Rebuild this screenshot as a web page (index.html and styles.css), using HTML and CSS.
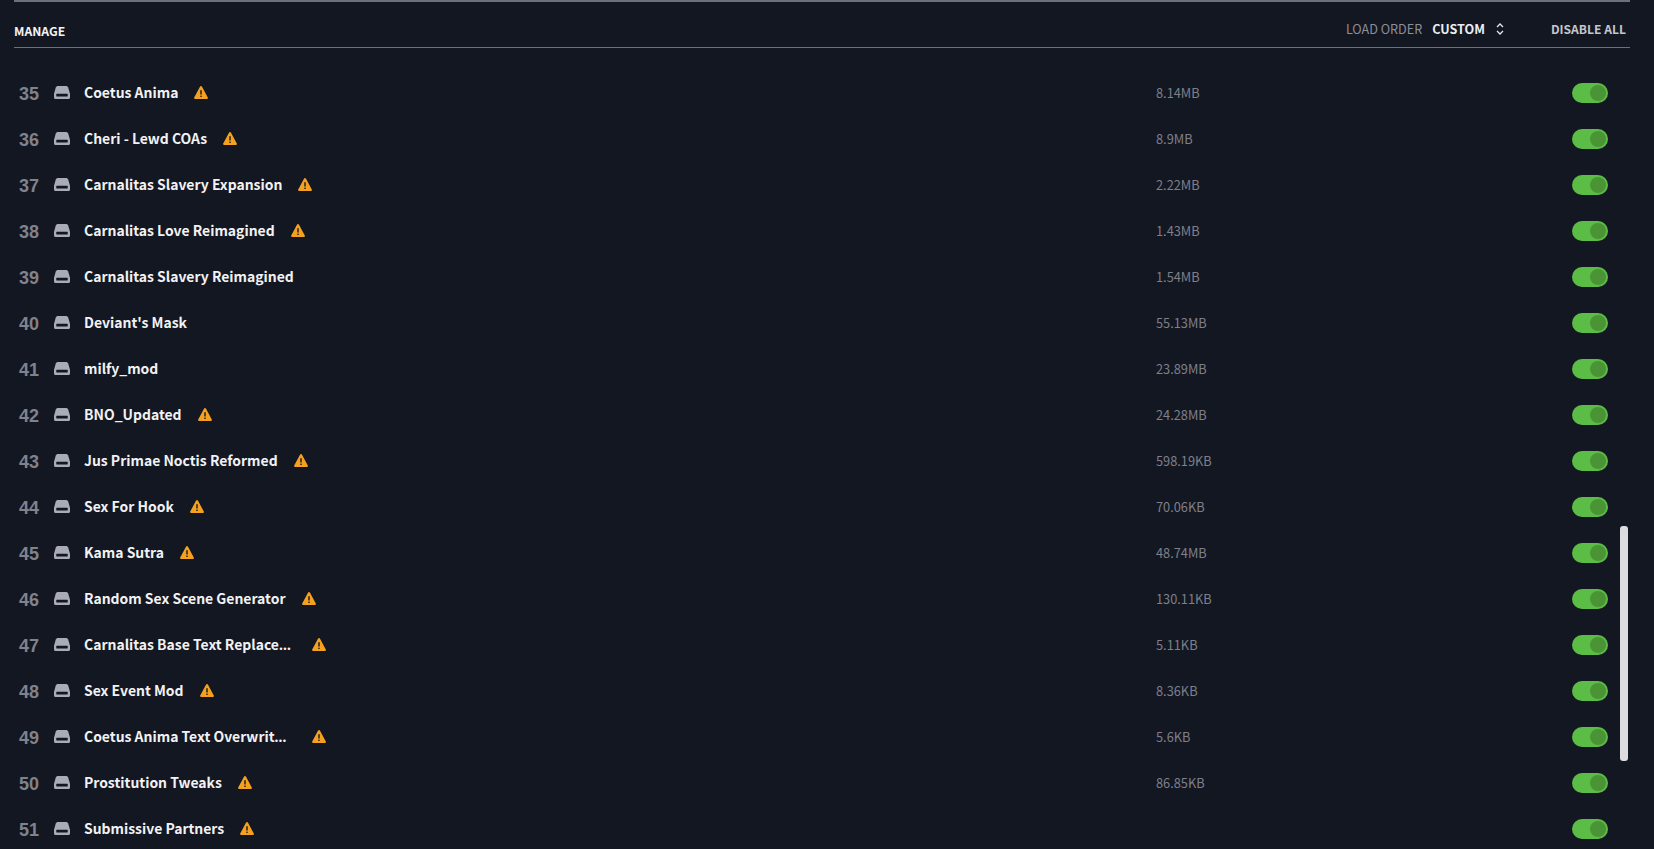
FILE: index.html
```html
<!DOCTYPE html>
<html lang="en">
<head>
<meta charset="utf-8">
<title>Manage</title>
<link rel="stylesheet" href="styles.css">
</head>
<body>
<svg class="defs" width="0" height="0" aria-hidden="true">
  <symbol id="drive" viewBox="0 0 16 13"><path d="M4 0h8c1.100 0 1.900.6 2.200 1.600L16 7.800V11.500c0 .9-.6 1.500-1.500 1.500h-13C.6 13 0 12.400 0 11.500V7.800L1.800 1.600C2.100.6 2.900 0 4 0Z" fill="#a9abb6"/><rect x="2.300" y="7.800" width="11.400" height="2.600" rx=".5" fill="#131722"/></symbol>
  <symbol id="warn" viewBox="0 0 14 13"><path d="M7 0c.4 0 .7.200.9.500l5.900 11c.4.700 0 1.500-.8 1.500H1c-.8 0-1.200-.8-.8-1.500L6.100.5C6.300.2 6.600 0 7 0Z" fill="#f5a11f"/><rect x="6.300" y="4.200" width="1.400" height="4.300" fill="#131722"/><rect x="6.300" y="9.600" width="1.400" height="1.400" fill="#131722"/></symbol>
</svg>
<main class="page">
  <div class="topbar"></div>
  <header class="head">
    <span class="manage">MANAGE</span>
    <div class="controls">
      <span class="lo-label">LOAD ORDER</span>
      <span class="lo-value">CUSTOM</span>
      <svg class="updown" viewBox="0 0 8 12" width="8" height="12"><path d="M1 4l3-3 3 3M1 8l3 3 3-3" fill="none" stroke="#e6e7ea" stroke-width="1.300"/></svg>
      <span class="disable">DISABLE ALL</span>
    </div>
  </header>
  <section class="list">
    <div class="row"><span class="num">35</span><svg class="drive"><use href="#drive"/></svg><div class="name"><span class="title">Coetus Anima</span><svg class="warn"><use href="#warn"/></svg></div><span class="size">8.14MB</span><span class="toggle"><i class="knob"></i></span></div>
    <div class="row"><span class="num">36</span><svg class="drive"><use href="#drive"/></svg><div class="name"><span class="title">Cheri - Lewd COAs</span><svg class="warn"><use href="#warn"/></svg></div><span class="size">8.9MB</span><span class="toggle"><i class="knob"></i></span></div>
    <div class="row"><span class="num">37</span><svg class="drive"><use href="#drive"/></svg><div class="name"><span class="title">Carnalitas Slavery Expansion</span><svg class="warn"><use href="#warn"/></svg></div><span class="size">2.22MB</span><span class="toggle"><i class="knob"></i></span></div>
    <div class="row"><span class="num">38</span><svg class="drive"><use href="#drive"/></svg><div class="name"><span class="title">Carnalitas Love Reimagined</span><svg class="warn"><use href="#warn"/></svg></div><span class="size">1.43MB</span><span class="toggle"><i class="knob"></i></span></div>
    <div class="row"><span class="num">39</span><svg class="drive"><use href="#drive"/></svg><div class="name"><span class="title">Carnalitas Slavery Reimagined</span></div><span class="size">1.54MB</span><span class="toggle"><i class="knob"></i></span></div>
    <div class="row"><span class="num">40</span><svg class="drive"><use href="#drive"/></svg><div class="name"><span class="title">Deviant's Mask</span></div><span class="size">55.13MB</span><span class="toggle"><i class="knob"></i></span></div>
    <div class="row"><span class="num">41</span><svg class="drive"><use href="#drive"/></svg><div class="name"><span class="title">milfy_mod</span></div><span class="size">23.89MB</span><span class="toggle"><i class="knob"></i></span></div>
    <div class="row"><span class="num">42</span><svg class="drive"><use href="#drive"/></svg><div class="name"><span class="title">BNO_Updated</span><svg class="warn"><use href="#warn"/></svg></div><span class="size">24.28MB</span><span class="toggle"><i class="knob"></i></span></div>
    <div class="row"><span class="num">43</span><svg class="drive"><use href="#drive"/></svg><div class="name"><span class="title">Jus Primae Noctis Reformed</span><svg class="warn"><use href="#warn"/></svg></div><span class="size">598.19KB</span><span class="toggle"><i class="knob"></i></span></div>
    <div class="row"><span class="num">44</span><svg class="drive"><use href="#drive"/></svg><div class="name"><span class="title">Sex For Hook</span><svg class="warn"><use href="#warn"/></svg></div><span class="size">70.06KB</span><span class="toggle"><i class="knob"></i></span></div>
    <div class="row"><span class="num">45</span><svg class="drive"><use href="#drive"/></svg><div class="name"><span class="title">Kama Sutra</span><svg class="warn"><use href="#warn"/></svg></div><span class="size">48.74MB</span><span class="toggle"><i class="knob"></i></span></div>
    <div class="row"><span class="num">46</span><svg class="drive"><use href="#drive"/></svg><div class="name"><span class="title">Random Sex Scene Generator</span><svg class="warn"><use href="#warn"/></svg></div><span class="size">130.11KB</span><span class="toggle"><i class="knob"></i></span></div>
    <div class="row"><span class="num">47</span><svg class="drive"><use href="#drive"/></svg><div class="name"><span class="title long">Carnalitas Base Text Replace<span class="dots">…</span></span><svg class="warn"><use href="#warn"/></svg></div><span class="size">5.11KB</span><span class="toggle"><i class="knob"></i></span></div>
    <div class="row"><span class="num">48</span><svg class="drive"><use href="#drive"/></svg><div class="name"><span class="title">Sex Event Mod</span><svg class="warn"><use href="#warn"/></svg></div><span class="size">8.36KB</span><span class="toggle"><i class="knob"></i></span></div>
    <div class="row"><span class="num">49</span><svg class="drive"><use href="#drive"/></svg><div class="name"><span class="title long">Coetus Anima Text Overwrit<span class="dots">…</span></span><svg class="warn"><use href="#warn"/></svg></div><span class="size">5.6KB</span><span class="toggle"><i class="knob"></i></span></div>
    <div class="row"><span class="num">50</span><svg class="drive"><use href="#drive"/></svg><div class="name"><span class="title">Prostitution Tweaks</span><svg class="warn"><use href="#warn"/></svg></div><span class="size">86.85KB</span><span class="toggle"><i class="knob"></i></span></div>
    <div class="row"><span class="num">51</span><svg class="drive"><use href="#drive"/></svg><div class="name"><span class="title">Submissive Partners</span><svg class="warn"><use href="#warn"/></svg></div><span class="size"></span><span class="toggle"><i class="knob"></i></span></div>
  </section>
  <div class="scrollbar"></div>
</main>
</body>
</html>
```
FILE: styles.css
```css
html, body {
  margin: 0;
  height: 100%;
  background: #131722;
  overflow: hidden;
}
.defs { position: absolute; }
.page {
  position: relative;
  height: 849px;
  box-sizing: border-box;
  padding: 0 24px 0 14px;
  font-family: "Noto Sans CJK SC", "Noto Sans", "Liberation Sans", sans-serif;
  color: #f2f2f4;
  overflow: hidden;
}
.topbar { height: 2px; background: #6d6f79; }
.head {
  display: flex;
  justify-content: space-between;
  align-items: center;
  height: 46px;
  box-sizing: border-box;
  border-bottom: 1px solid #6d6f79;
  padding-right: 4px;
}
.manage { font-size: 12.200px; font-weight: 700; line-height: 1; padding-top: 13px; color: #f2f2f4; }
.controls { display: flex; align-items: center; padding-top: 9px; font-size: 12.600px; line-height: 1; }
.lo-label { color: #8c8e98; }
.lo-value { margin-left: 10px; font-weight: 700; color: #eceef0; }
.updown { margin-left: 11px; }
.disable { margin-left: 47px; font-size: 12.100px; font-weight: 700; color: #c4c6cc; }
.list { padding-top: 22px; }
.row {
  display: grid;
  grid-template-columns: 40px 30px 1072px 416px 36px;
  align-items: center;
  height: 46px;
}
.num {
  padding: 3px 0 0 5px;
  font-family: "Liberation Sans", sans-serif;
  font-size: 18px;
  font-weight: 700;
  color: #80828c;
}
.drive { width: 16px; height: 13px; margin-bottom: 1px; }
.name { display: flex; align-items: center; min-width: 0; }
.title {
  padding-bottom: 2px;
  font-size: 13.950px;
  font-weight: 700;
  line-height: 20px;
  white-space: nowrap;
  color: #f2f2f4;
}
.title.long { display: inline-block; width: 212px; }
.dots { font-family: "Noto Sans", sans-serif; letter-spacing: 2px; }
.warn { width: 14px; height: 13px; margin: 0 0 1px 16px; }
.size { padding-bottom: 1px; font-size: 12.800px; color: #7d7f8a; }
.toggle {
  display: flex;
  justify-content: flex-end;
  align-items: center;
  width: 36px;
  height: 20px;
  box-sizing: border-box;
  padding-right: 2px;
  border-radius: 10px;
  background: #5bbd45;
}
.knob { display: block; width: 16px; height: 16px; border-radius: 50%; background: #4a9435; }
.scrollbar {
  position: absolute;
  left: 1620px;
  top: 526px;
  width: 8px;
  height: 235px;
  border-radius: 3px;
  background: #dcdcde;
}
```
